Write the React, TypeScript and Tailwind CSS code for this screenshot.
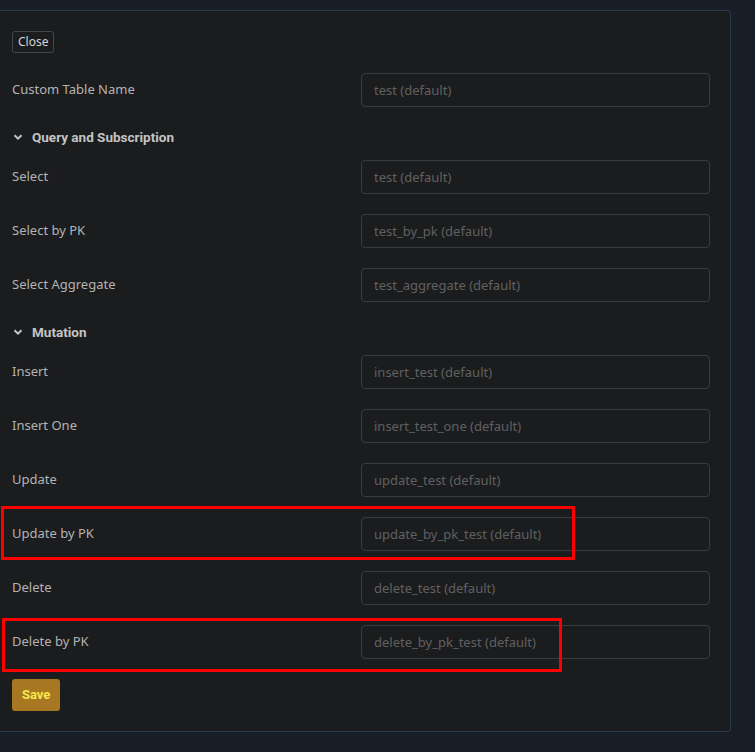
const querRows = [
  { label: "Select", placeholder: "test (default)" },
  { label: "Select by PK", placeholder: "test_by_pk (default)" },
  { label: "Select Aggregate", placeholder: "test_aggregate (default)" },
];

const mutationRows = [
  { label: "Insert", placeholder: "insert_test (default)" },
  { label: "Insert One", placeholder: "insert_test_one (default)" },
  { label: "Update", placeholder: "update_test (default)" },
  { label: "Update by PK", placeholder: "update_by_pk_test (default)", mark: "update" },
  { label: "Delete", placeholder: "delete_test (default)" },
  { label: "Delete by PK", placeholder: "delete_by_pk_test (default)", mark: "delete" },
];

function Row({ label, placeholder, mark }: { label: string; placeholder: string; mark?: string }) {
  return (
    <div className="relative flex items-center justify-between">
      <label className="text-[13px] text-[#b3b3b3]">{label}</label>
      <input
        type="text"
        placeholder={placeholder}
        className="h-[34px] w-[349px] rounded-[4px] border border-[#3a3b3d] bg-[#1b1c1e] px-3 text-[13px] text-[#ccc] placeholder:text-[#606060] outline-none"
      />
      {mark === "update" && (
        <div className="pointer-events-none absolute -top-[11px] -left-[11px] h-[54px] w-[574px] border-[3px] border-[#ff0000]" />
      )}
      {mark === "delete" && (
        <div className="pointer-events-none absolute -top-[7px] -left-[10px] h-[54px] w-[560px] border-[3px] border-[#ff0000]" />
      )}
    </div>
  );
}

function Heading({ title }: { title: string }) {
  return (
    <div
      className="flex h-5 items-center gap-[9px] text-[13.5px] font-bold text-[#c4c4c4]"
      style={{ fontFamily: "Roboto, sans-serif" }}
    >
      <svg width="10" height="10" viewBox="0 0 10 10" className="ml-[1px]">
        <path d="M1.5 3.2 L5 6.7 L8.5 3.2" fill="none" stroke="#c4c4c4" strokeWidth="2" />
      </svg>
      {title}
    </div>
  );
}

export default function App() {
  return (
    <div
      className="min-h-[752px] bg-[#171e26] pt-[10px]"
      style={{ fontFamily: '"Noto Sans", "Open Sans", sans-serif' }}
    >
      <div className="w-[731px] rounded-r-[4px] border border-l-0 border-[#2b3a4b] bg-[#1b1c1e] pt-5 pr-5 pb-5 pl-3">
        <div className="flex">
          <button className="h-[22px] rounded-[3px] border border-[#454649] px-[5px] text-[12px] leading-none text-[#d4d4d4]">
            Close
          </button>
        </div>

        <div className="mt-5 flex flex-col gap-5">
          <Row label="Custom Table Name" placeholder="test (default)" />

          <div className="flex flex-col gap-[13px]">
            <Heading title="Query and Subscription" />
            <div className="flex flex-col gap-5">
              {querRows.map((r) => (
                <Row key={r.label} {...r} />
              ))}
            </div>
          </div>

          <div className="flex flex-col gap-[13px]">
            <Heading title="Mutation" />
            <div className="flex flex-col gap-5">
              {mutationRows.map((r) => (
                <Row key={r.label} {...r} />
              ))}
            </div>
          </div>

          <div className="flex">
            <button
              className="h-8 rounded-[3px] bg-[#a87722] px-[10px] text-[13px] font-bold text-[#f6e84c]"
              style={{ fontFamily: "Roboto, sans-serif" }}
            >
              Save
            </button>
          </div>
        </div>
      </div>
    </div>
  );
}
